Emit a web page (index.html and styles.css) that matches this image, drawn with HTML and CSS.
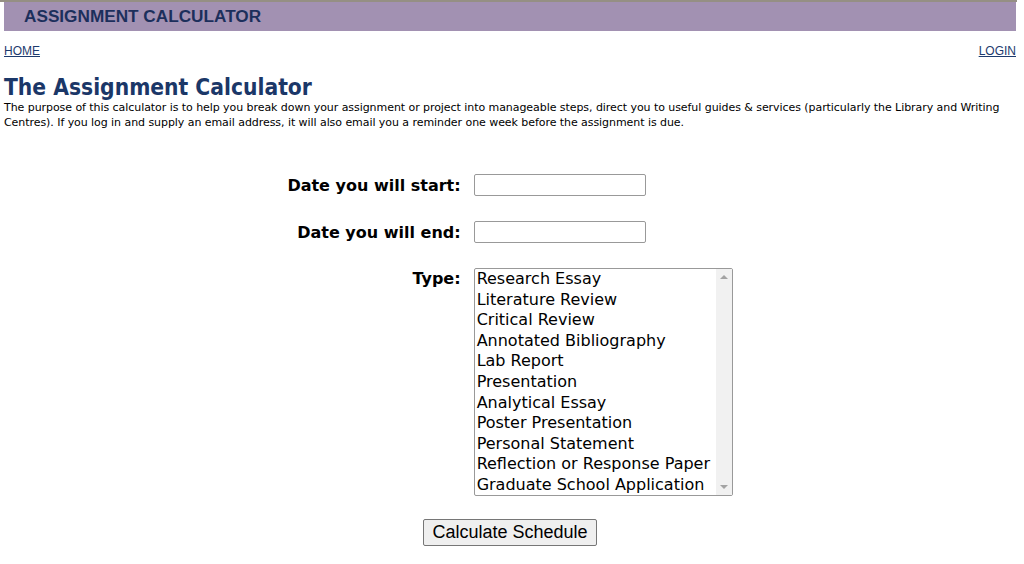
FILE: index.html
```html
<!DOCTYPE html>
<html lang="en">
<head>
    <meta charset="UTF-8">
    <title>Assignment Calculator</title>
    <link rel="stylesheet" href="styles.css">
</head>
<body>
    <div class="page">
        <header class="banner">
            <span class="banner-title">ASSIGNMENT CALCULATOR</span>
        </header>

        <nav class="nav">
            <a href="#">HOME</a>
            <a href="#">LOGIN</a>
        </nav>

        <h1 class="title">The Assignment Calculator</h1>
        <p class="intro">The purpose of this calculator is to help you break down your assignment or project into manageable steps, direct you to useful guides &amp; services (particularly the Library and Writing Centres). If you log in and supply an email address, it will also email you a reminder one week before the assignment is due.</p>

        <form class="calc-form">
            <div class="form-grid">
                <label class="form-label" for="start">Date you will start:</label>
                <input class="date-input" type="text" id="start">

                <label class="form-label" for="end">Date you will end:</label>
                <input class="date-input" type="text" id="end">

                <label class="form-label label-top" for="type">Type:</label>
                <div class="select-wrap">
                    <select class="type-select" id="type" size="11">
                        <option>Research Essay</option>
                        <option>Literature Review</option>
                        <option>Critical Review</option>
                        <option>Annotated Bibliography</option>
                        <option>Lab Report</option>
                        <option>Presentation</option>
                        <option>Analytical Essay</option>
                        <option>Poster Presentation</option>
                        <option>Personal Statement</option>
                        <option>Reflection or Response Paper</option>
                        <option>Graduate School Application</option>
                    </select>
                    <div class="fake-scroll">
                        <span class="arrow arrow-up"></span>
                        <span class="arrow arrow-down"></span>
                    </div>
                </div>
            </div>
            <div class="form-actions">
                <button class="btn-calc" type="button">Calculate Schedule</button>
            </div>
        </form>
    </div>
</body>
</html>
```

FILE: styles.css
```css
* {
    box-sizing: border-box;
}

body {
    margin: 0;
    background: #fff;
    color: #000;
    font-family: 'DejaVu Sans', sans-serif;
}

.page {
    margin-right: 7px;
    padding: 0 1px 0 4px;
    border-top: 2px solid #958f84;
}

.banner {
    height: 29px;
    background: #a291b2;
    padding-left: 20px;
    display: flex;
    align-items: center;
}

.banner-title {
    font-family: 'Liberation Sans', Arial, sans-serif;
    font-weight: bold;
    font-size: 17.2px;
    color: #1c2f5c;
}

.nav {
    display: flex;
    justify-content: space-between;
    margin-top: 13px;
    font-family: 'Liberation Sans', Arial, sans-serif;
    font-size: 12px;
}

.nav a {
    color: #1d3b6e;
}

.title {
    margin: 16px 0 0;
    font-family: 'DejaVu Sans Condensed', 'DejaVu Sans', sans-serif;
    font-size: 22.6px;
    line-height: 26px;
    color: #1b3768;
}

.intro {
    margin: 0;
    font-size: 11px;
    line-height: 15px;
    letter-spacing: -0.06px;
}

.calc-form {
    margin-top: 44px;
}

.form-grid {
    display: grid;
    grid-template-columns: auto auto;
    justify-content: center;
    align-items: center;
    column-gap: 13px;
    row-gap: 25px;
}

.form-label {
    justify-self: end;
    font-weight: bold;
    font-size: 16px;
}

.label-top {
    align-self: start;
    padding-top: 1px;
}

.date-input {
    width: 172px;
    height: 22px;
    border: 1px solid #999;
    border-radius: 2px;
    font-size: 13px;
}

.select-wrap {
    position: relative;
    width: 259px;
    height: 228px;
}

.type-select {
    display: block;
    width: 100%;
    height: 100%;
    border: 1px solid #999;
    border-radius: 2px;
    font-family: 'DejaVu Sans', sans-serif;
    font-size: 16px;
    padding: 0;
    overflow: hidden;
}

.type-select option {
    padding: 0 2px;
    height: 20.6px;
}

.fake-scroll {
    position: absolute;
    top: 1px;
    right: 1px;
    bottom: 1px;
    width: 16px;
    background: #f1f1f1;
}

.arrow {
    position: absolute;
    left: 4px;
    width: 0;
    height: 0;
    border-left: 4px solid transparent;
    border-right: 4px solid transparent;
}

.arrow-up {
    top: 6px;
    border-bottom: 4px solid #a3a3a3;
}

.arrow-down {
    bottom: 6px;
    border-top: 4px solid #a3a3a3;
}

.form-actions {
    display: flex;
    justify-content: center;
    margin-top: 23px;
}

.btn-calc {
    font-family: 'Liberation Sans', Arial, sans-serif;
    font-size: 18px;
    padding: 2px 8px;
    height: 27px;
    background: #efefef;
    border: 1px solid #767676;
    border-radius: 2px;
    color: #000;
}
```
